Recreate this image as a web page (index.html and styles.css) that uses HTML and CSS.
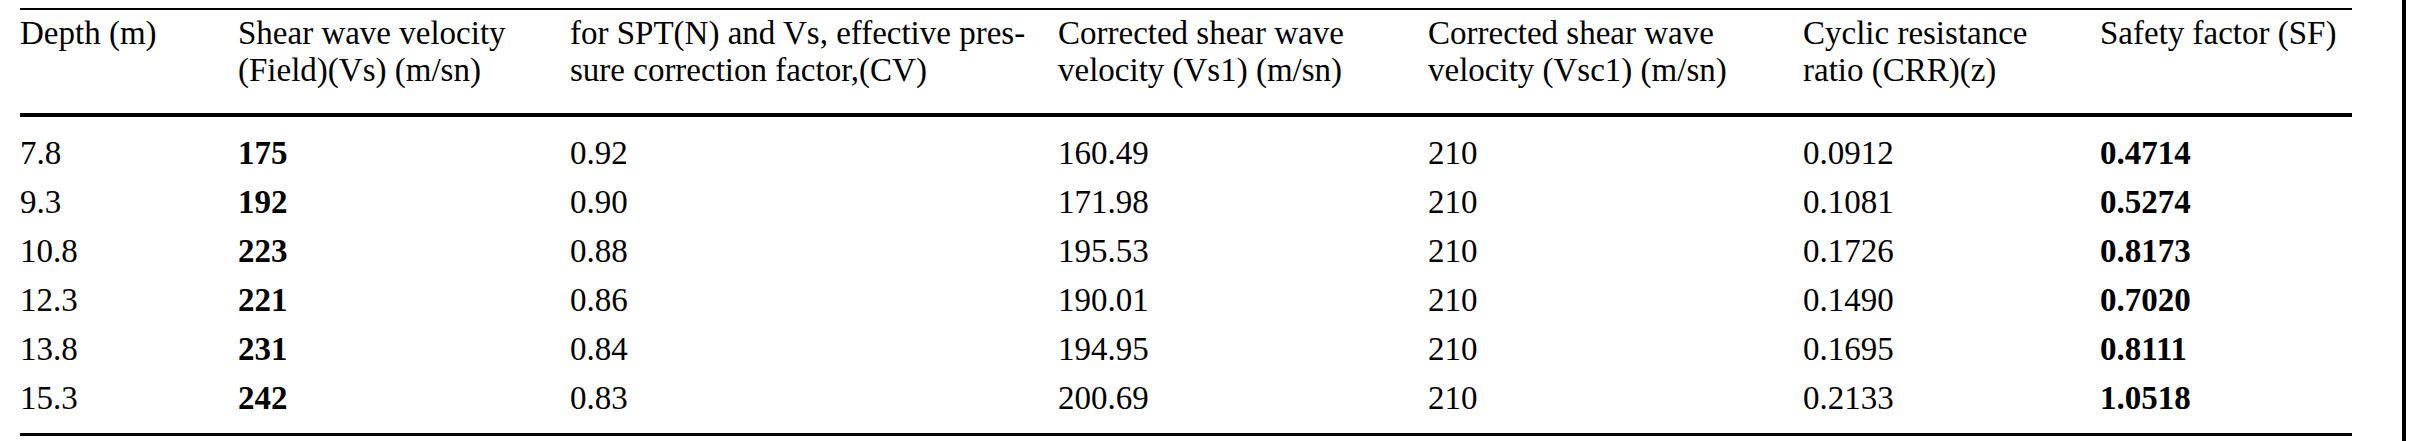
FILE: index.html
```html
<!DOCTYPE html>
<html lang="en">
<head>
<meta charset="utf-8">
<title>Table</title>
<link rel="stylesheet" href="styles.css">
</head>
<body>
<div class="page">
  <table class="data">
    <colgroup>
      <col class="c1"><col class="c2"><col class="c3"><col class="c4"><col class="c5"><col class="c6"><col class="c7">
    </colgroup>
    <thead>
      <tr>
        <th>Depth (m)</th>
        <th>Shear wave velocity<br>(Field)(Vs) (m/sn)</th>
        <th>for SPT(N) and Vs, effective pres-<br>sure correction factor,(CV)</th>
        <th>Corrected shear wave<br>velocity (Vs1) (m/sn)</th>
        <th>Corrected shear wave<br>velocity (Vsc1) (m/sn)</th>
        <th>Cyclic resistance<br>ratio (CRR)(z)</th>
        <th>Safety factor (SF)</th>
      </tr>
    </thead>
    <tbody>
      <tr class="first"><td>7.8</td><td class="b">175</td><td>0.92</td><td>160.49</td><td>210</td><td>0.0912</td><td class="b">0.4714</td></tr>
      <tr><td>9.3</td><td class="b">192</td><td>0.90</td><td>171.98</td><td>210</td><td>0.1081</td><td class="b">0.5274</td></tr>
      <tr><td>10.8</td><td class="b">223</td><td>0.88</td><td>195.53</td><td>210</td><td>0.1726</td><td class="b">0.8173</td></tr>
      <tr><td>12.3</td><td class="b">221</td><td>0.86</td><td>190.01</td><td>210</td><td>0.1490</td><td class="b">0.7020</td></tr>
      <tr><td>13.8</td><td class="b">231</td><td>0.84</td><td>194.95</td><td>210</td><td>0.1695</td><td class="b">0.8111</td></tr>
      <tr class="last"><td>15.3</td><td class="b">242</td><td>0.83</td><td>200.69</td><td>210</td><td>0.2133</td><td class="b">1.0518</td></tr>
    </tbody>
  </table>
</div>
</body>
</html>
```

FILE: styles.css
```css
html, body {
  margin: 0;
  padding: 0;
  background: #fff;
}

.page {
  width: 2406px;
  height: 441px;
  border-right: 4px solid #000;
  padding-top: 8px;
  box-sizing: border-box;
  font-family: "Liberation Serif", "Times New Roman", serif;
  color: #000;
}

.data {
  margin-left: 20px;
  width: 2332px;
  border-collapse: collapse;
  table-layout: fixed;
  font-size: 33px;
}

.c1 { width: 218px; }
.c2 { width: 332px; }
.c3 { width: 488px; }
.c4 { width: 370px; }
.c5 { width: 375px; }
.c6 { width: 297px; }
.c7 { width: 252px; }

.data thead tr {
  border-top: 2px solid #000;
  border-bottom: 4px solid #000;
}

.data th {
  font-weight: normal;
  text-align: left;
  vertical-align: top;
  line-height: 37px;
  padding: 5px 0 24px 0;
  white-space: nowrap;
}

.data td {
  padding: 0;
  line-height: 49px;
  text-align: left;
  white-space: nowrap;
}

.data tbody tr.first td {
  padding-top: 12px;
}

.data tbody tr.last {
  border-bottom: 3px solid #000;
}

.data tbody tr.last td {
  padding-bottom: 10px;
}

.data td.b {
  font-weight: bold;
}
```
